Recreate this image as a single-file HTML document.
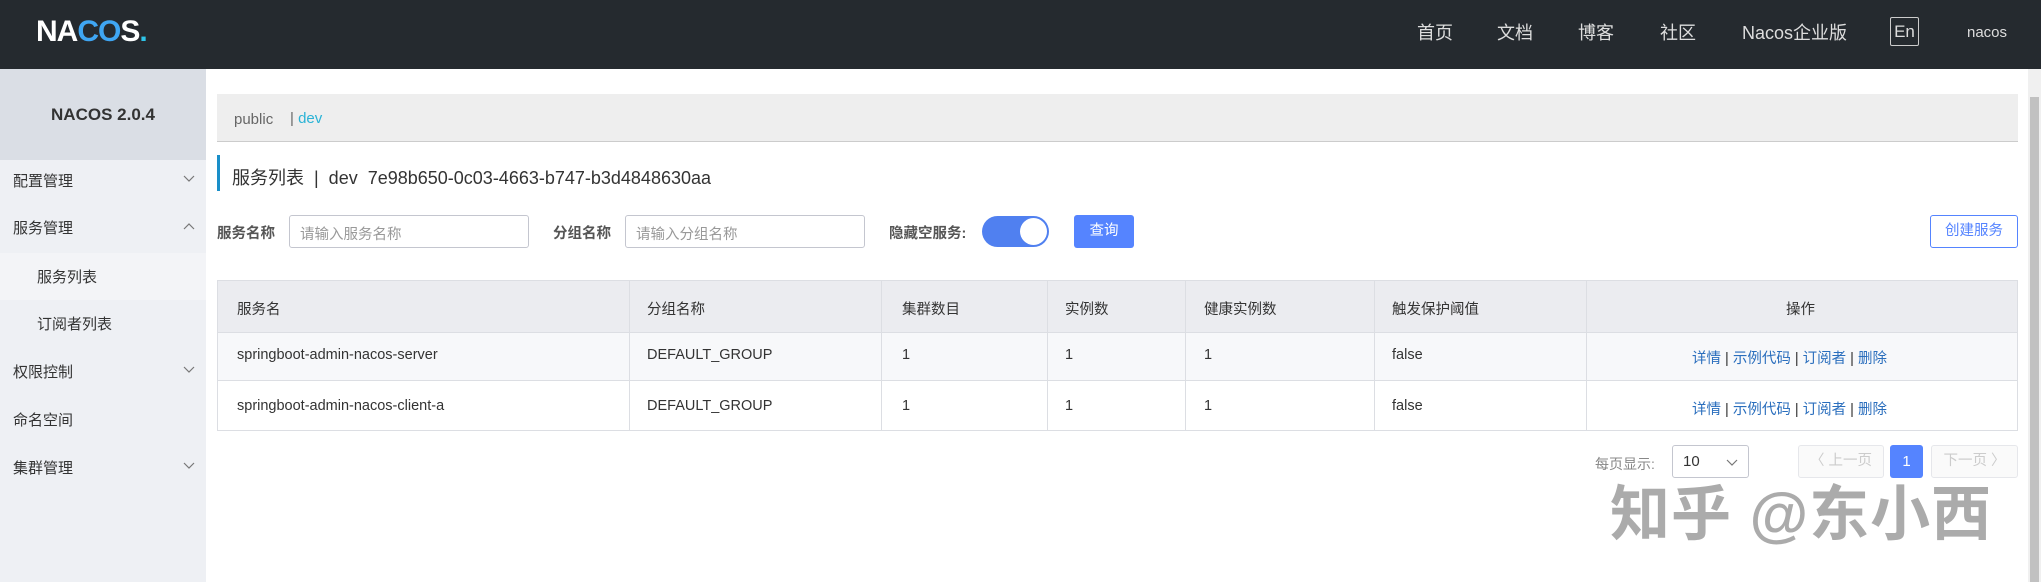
<!DOCTYPE html>
<html><head><meta charset="utf-8"><style>
*{margin:0;padding:0;box-sizing:border-box}
body{width:2041px;height:582px;overflow:hidden;background:#fff;font-family:"Liberation Sans","Noto Sans CJK SC",sans-serif;color:#333;position:relative}
.a{position:absolute;white-space:nowrap}
.hdr{left:0;top:0;width:2041px;height:69px;background:#252a2f}
.nav{color:#ddd;font-size:18px;top:19px}
.side{left:0;top:69px;width:206px;height:513px;background:#eef0f4}
.mi{font-size:15px;color:#333;left:13px}
.chev{position:absolute;left:183px;width:12px;height:8px}
.sub{font-size:15px;color:#333;left:37px}
.th{font-size:14.5px;color:#333;top:298px}
.td{font-size:14.5px;color:#333}
.lnk{color:#2a6ebd}
.vl{position:absolute;top:280px;width:1px;height:151px;background:#dcdee3}
</style></head><body>
<div class="a hdr"></div>
<div class="a" style="left:36px;top:15px;font-size:30px;font-weight:bold;color:#fff;letter-spacing:-1px">NA<span style="color:#3fa6f3">CO</span>S<span style="color:#2ec4e8">.</span></div>
<div class="a nav" style="left:1417px">首页</div>
<div class="a nav" style="left:1497px">文档</div>
<div class="a nav" style="left:1578px">博客</div>
<div class="a nav" style="left:1660px">社区</div>
<div class="a nav" style="left:1742px">Nacos企业版</div>
<div class="a nav" style="left:1890px;top:17px;width:29px;height:29px;border:1px solid #ccc;border-radius:2px;text-align:center;line-height:27px;font-size:17px">En</div>
<div class="a nav" style="left:1967px;font-size:15px;top:24px">nacos</div>

<div class="a side"></div>
<div class="a" style="left:0;top:69px;width:206px;height:91px;background:#dadee5;text-align:center;line-height:91px;font-size:17px;font-weight:bold;color:#333">NACOS 2.0.4</div>
<div class="a mi" style="top:170px">配置管理</div>
<svg class="chev" style="top:175px" viewBox="0 0 12 8"><path d="M1 1L6 6L11 1" fill="none" stroke="#777" stroke-width="1.2"/></svg>
<div class="a mi" style="top:217px">服务管理</div>
<svg class="chev" style="top:222px" viewBox="0 0 12 8"><path d="M1 7L6 2L11 7" fill="none" stroke="#777" stroke-width="1.2"/></svg>
<div class="a" style="left:0;top:253px;width:206px;height:47px;background:#f3f4f7"></div>
<div class="a sub" style="top:266px">服务列表</div>
<div class="a sub" style="top:313px">订阅者列表</div>
<div class="a mi" style="top:361px">权限控制</div>
<svg class="chev" style="top:366px" viewBox="0 0 12 8"><path d="M1 1L6 6L11 1" fill="none" stroke="#777" stroke-width="1.2"/></svg>
<div class="a mi" style="top:409px">命名空间</div>
<div class="a mi" style="top:457px">集群管理</div>
<svg class="chev" style="top:462px" viewBox="0 0 12 8"><path d="M1 1L6 6L11 1" fill="none" stroke="#777" stroke-width="1.2"/></svg>

<div class="a" style="left:217px;top:94px;width:1801px;height:48px;background:#eeeeee;border-bottom:1px solid #ccc"></div>
<div class="a" style="left:234px;top:111px;font-size:15px;color:#666">public</div>
<div class="a" style="left:290px;top:110px;font-size:15px;color:#666">| <span style="color:#2ab3d6">dev</span></div>

<div class="a" style="left:217px;top:155px;width:3px;height:36px;background:#1a8fc9"></div>
<div class="a" style="left:232px;top:164px;font-size:18px;color:#333">服务列表 &nbsp;| &nbsp;dev &nbsp;7e98b650-0c03-4663-b747-b3d4848630aa</div>

<div class="a" style="left:217px;top:222px;font-size:14.5px;font-weight:bold;color:#555">服务名称</div>
<div class="a" style="left:289px;top:215px;width:240px;height:33px;border:1px solid #c4c6cf;border-radius:3px;font-size:14.5px;color:#999;padding:7px 10px">请输入服务名称</div>
<div class="a" style="left:553px;top:222px;font-size:14.5px;font-weight:bold;color:#555">分组名称</div>
<div class="a" style="left:625px;top:215px;width:240px;height:33px;border:1px solid #c4c6cf;border-radius:3px;font-size:14.5px;color:#999;padding:7px 10px">请输入分组名称</div>
<div class="a" style="left:889px;top:222px;font-size:14.5px;font-weight:bold;color:#555">隐藏空服务:</div>
<div class="a" style="left:982px;top:216px;width:67px;height:31px;border-radius:16px;background:#5080f0"></div>
<div class="a" style="left:1020px;top:218px;width:27px;height:27px;border-radius:50%;background:#fff"></div>
<div class="a" style="left:1074px;top:215px;width:60px;height:33px;border-radius:3px;background:#5584ff;color:#fff;font-size:14.5px;text-align:center;line-height:33px">查询</div>
<div class="a" style="left:1930px;top:215px;width:88px;height:33px;border:1px solid #5584ff;border-radius:3px;color:#5584ff;font-size:14.5px;text-align:center;line-height:31px">创建服务</div>

<div class="a" style="left:217px;top:280px;width:1801px;height:151px;border:1px solid #dcdee3"></div>
<div class="a" style="left:218px;top:281px;width:1799px;height:51px;background:#ebecf0"></div>
<div class="a" style="left:218px;top:332px;width:1799px;height:49px;background:#f7f8fa;border-top:1px solid #dcdee3;border-bottom:1px solid #dcdee3"></div>
<div class="vl" style="left:629px"></div><div class="vl" style="left:881px"></div><div class="vl" style="left:1047px"></div><div class="vl" style="left:1185px"></div><div class="vl" style="left:1374px"></div><div class="vl" style="left:1586px"></div>
<div class="a th" style="left:237px">服务名</div>
<div class="a th" style="left:647px">分组名称</div>
<div class="a th" style="left:902px">集群数目</div>
<div class="a th" style="left:1065px">实例数</div>
<div class="a th" style="left:1204px">健康实例数</div>
<div class="a th" style="left:1392px">触发保护阈值</div>
<div class="a th" style="left:1786px">操作</div>
<div class="a td" style="left:237px;top:347px">springboot-admin-nacos-server</div>
<div class="a td" style="left:647px;top:347px">DEFAULT_GROUP</div>
<div class="a td" style="left:902px;top:347px">1</div><div class="a td" style="left:1065px;top:347px">1</div><div class="a td" style="left:1204px;top:347px">1</div>
<div class="a td" style="left:1392px;top:347px">false</div>
<div class="a td" style="left:1692px;top:347px"><span class="lnk">详情</span> | <span class="lnk">示例代码</span> | <span class="lnk">订阅者</span> | <span class="lnk">删除</span></div>
<div class="a td" style="left:237px;top:398px">springboot-admin-nacos-client-a</div>
<div class="a td" style="left:647px;top:398px">DEFAULT_GROUP</div>
<div class="a td" style="left:902px;top:398px">1</div><div class="a td" style="left:1065px;top:398px">1</div><div class="a td" style="left:1204px;top:398px">1</div>
<div class="a td" style="left:1392px;top:398px">false</div>
<div class="a td" style="left:1692px;top:398px"><span class="lnk">详情</span> | <span class="lnk">示例代码</span> | <span class="lnk">订阅者</span> | <span class="lnk">删除</span></div>

<div class="a" style="left:1595px;top:454px;font-size:14px;color:#888">每页显示:</div>
<div class="a" style="left:1672px;top:445px;width:77px;height:33px;border:1px solid #c4c6cf;border-radius:3px;font-size:15px;color:#333;padding:7px 10px">10<svg style="position:absolute;right:10px;top:13px" width="12" height="8" viewBox="0 0 12 8"><path d="M1 1L6 6L11 1" fill="none" stroke="#777" stroke-width="1.2"/></svg></div>
<div class="a" style="left:1798px;top:445px;width:86px;height:33px;border:1px solid #e6e7eb;border-radius:3px;background:#fafafa;color:#ccc;font-size:14.5px;text-align:center;line-height:31px">〈 上一页</div>
<div class="a" style="left:1890px;top:445px;width:33px;height:33px;border-radius:3px;background:#5584ff;color:#fff;font-size:15px;text-align:center;line-height:33px">1</div>
<div class="a" style="left:1931px;top:445px;width:87px;height:33px;border:1px solid #e6e7eb;border-radius:3px;background:#fafafa;color:#ccc;font-size:14.5px;text-align:center;line-height:31px">下一页 〉</div>

<div class="a" style="left:1610px;top:466px;font-size:60px;color:rgba(150,150,150,0.8);font-weight:bold;letter-spacing:1px">知乎 @东小西</div>
<div class="a" style="left:2028px;top:69px;width:13px;height:513px;background:#f0f0f0"></div>
<div class="a" style="left:2030px;top:97px;width:9px;height:485px;background:#c1c1c1"></div>
</body></html>
